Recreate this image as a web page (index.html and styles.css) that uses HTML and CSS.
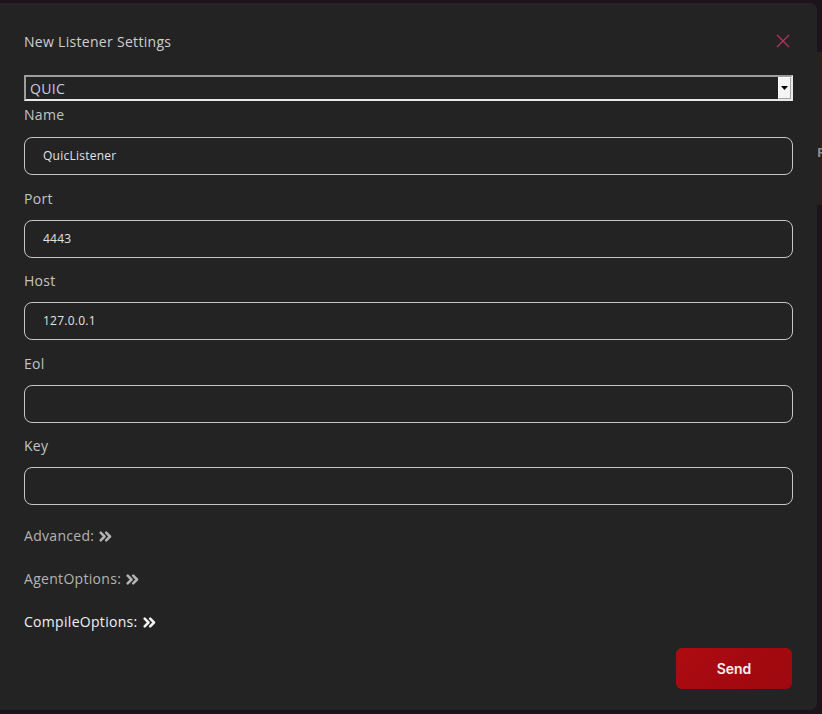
FILE: index.html
```html
<!DOCTYPE html>
<html lang="en">
<head>
<meta charset="utf-8">
<title>New Listener Settings</title>
<link rel="stylesheet" href="styles.css">
</head>
<body>
<div class="page">
  <div class="modal">
    <div class="modal-header">
      <span class="modal-title">New Listener Settings</span>
      <button class="close-btn" aria-label="Close">
        <svg width="14" height="14" viewBox="0 0 14 14"><path d="M1 1 L13 13 M13 1 L1 13" stroke="#b8335a" stroke-width="1.2" fill="none"/></svg>
      </button>
    </div>
    <div class="select-box">
      <span class="select-value">QUIC</span>
      <span class="select-btn"><svg width="7" height="4" viewBox="0 0 7 4"><path d="M0 0 H7 L3.5 4 Z" fill="#000"/></svg></span>
    </div>
    <div class="field first">
      <label class="field-label">Name</label>
      <div class="field-input">QuicListener</div>
    </div>
    <div class="field">
      <label class="field-label">Port</label>
      <div class="field-input">4443</div>
    </div>
    <div class="field">
      <label class="field-label">Host</label>
      <div class="field-input">127.0.0.1</div>
    </div>
    <div class="field">
      <label class="field-label">Eol</label>
      <div class="field-input"></div>
    </div>
    <div class="field">
      <label class="field-label">Key</label>
      <div class="field-input"></div>
    </div>
    <div class="toggles">
      <div class="toggle"><span>Advanced:</span><svg class="chev" width="13" height="11" viewBox="0 0 13 11"><path d="M1.7 1.7 L5.5 5.5 L1.7 9.3 M7.2 1.7 L11 5.5 L7.2 9.3" stroke="currentColor" stroke-width="2.5" fill="none" stroke-linejoin="round" stroke-linecap="round"/></svg></div>
      <div class="toggle"><span>AgentOptions:</span><svg class="chev" width="13" height="11" viewBox="0 0 13 11"><path d="M1.7 1.7 L5.5 5.5 L1.7 9.3 M7.2 1.7 L11 5.5 L7.2 9.3" stroke="currentColor" stroke-width="2.5" fill="none" stroke-linejoin="round" stroke-linecap="round"/></svg></div>
      <div class="toggle active"><span>CompileOptions:</span><svg class="chev" width="13" height="11" viewBox="0 0 13 11"><path d="M1.7 1.7 L5.5 5.5 L1.7 9.3 M7.2 1.7 L11 5.5 L7.2 9.3" stroke="currentColor" stroke-width="2.5" fill="none" stroke-linejoin="round" stroke-linecap="round"/></svg></div>
    </div>
    <div class="footer">
      <button class="send-btn">Send</button>
    </div>
  </div>
  <div class="side">
    <div class="side-panel"><span class="side-letter">F</span></div>
  </div>
</div>
</body>
</html>
```

FILE: styles.css
```css
html, body {
  margin: 0;
  padding: 0;
  background: #1d131a;
  height: 714px;
  overflow: hidden;
}
.page {
  display: flex;
  align-items: flex-start;
  height: 714px;
}
.modal {
  width: 817px;
  flex: 0 0 817px;
  height: 707px;
  margin-top: 3px;
  box-sizing: border-box;
  background: #232323;
  border-radius: 0 7px 7px 0;
  padding: 23px 24px 0 24px;
  font-family: "Open Sans", "DejaVu Sans", sans-serif;
  letter-spacing: 0.3px;
}
.modal-header {
  display: flex;
  align-items: center;
  justify-content: space-between;
  height: 30px;
  margin-bottom: 19px;
}
.modal-title {
  font-size: 14px;
  color: #cfcfcf;
}
.close-btn {
  background: none;
  border: 0;
  padding: 0;
  margin-right: 3px;
  width: 14px;
  height: 14px;
  display: flex;
}
.select-box {
  display: flex;
  align-items: stretch;
  height: 26px;
  box-sizing: border-box;
  width: 769px;
  border: 2px solid;
  border-color: #9d9d9d #e9e9e9 #e9e9e9 #9d9d9d;
  background: #232323;
}
.select-value {
  flex: 1;
  font-size: 14px;
  line-height: 24px;
  padding-left: 4px;
  color: #c9cbe0;
}
.select-btn {
  width: 11px;
  background: #f4f4f4;
  border: 1px solid;
  border-color: #ffffff #a3a3a3 #a3a3a3 #ffffff;
  display: flex;
  align-items: center;
  justify-content: center;
}
.field-label {
  display: block;
  margin: 12.5px 0 10px;
  font-size: 14px;
  line-height: 22px;
  color: #c4c4c4;
}
.field.first .field-label {
  margin: 3px 0 11px;
}
.field-input {
  box-sizing: border-box;
  width: 769px;
  height: 38px;
  border: 1px solid #c6c6c6;
  border-radius: 8px;
  padding-left: 18px;
  font-size: 12px;
  letter-spacing: 0.25px;
  line-height: 36px;
  color: #e2e2e2;
}
.toggles {
  margin-top: 20px;
  display: flex;
  flex-direction: column;
  gap: 21px;
}
.toggle {
  font-size: 14px;
  line-height: 22px;
  color: #b4b4b4;
  display: flex;
  align-items: center;
  gap: 5px;
}
.toggle.active {
  color: #f2f2f2;
}
.chev {
  display: block;
}
.footer {
  display: flex;
  justify-content: flex-end;
  margin-top: 15px;
  padding-right: 1px;
}
.send-btn {
  width: 116px;
  height: 41px;
  border: 0;
  border-radius: 6px;
  background: linear-gradient(135deg, #ad0b12, #9d080e);
  color: #f4f4f4;
  font-family: Inter, "Liberation Sans", sans-serif;
  font-weight: 600;
  font-size: 14px;
  letter-spacing: 0;
}
.side {
  flex: 1;
  height: 714px;
  overflow: hidden;
}
.side-panel {
  margin-top: 52px;
  height: 153px;
  box-sizing: border-box;
  background: #2b2020;
  padding-top: 91px;
}
.side-letter {
  display: block;
  font-family: "Open Sans", sans-serif;
  font-weight: 700;
  font-size: 13px;
  line-height: 18px;
  color: #8d8d8d;
}
```
